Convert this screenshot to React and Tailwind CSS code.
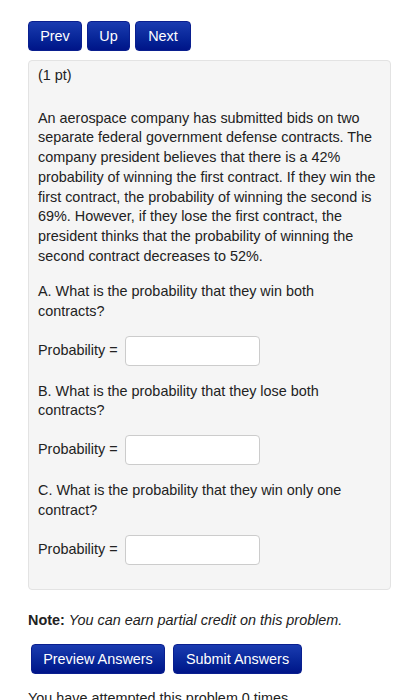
import React from "react";

const btn =
  "h-[30px] rounded-[4px] border border-[#0a1f8f] bg-gradient-to-b from-[#1a3bb0] to-[#001488] text-white text-[14.4px] leading-none";

const AnswerRow = () => (
  <div className="flex items-center gap-[7px] mt-[14px] mb-[16px]">
    <span>Probability =</span>
    <input className="w-[135px] h-[30px] bg-white border border-[#cccccc] rounded-[4px] outline-none" />
  </div>
);

export default function App() {
  return (
    <div
      className="bg-white text-[#222] text-[14.4px] leading-[19.7px] pl-[28px] pr-[29px] pt-[21px]"
      style={{ fontFamily: '"Liberation Sans", Arial, sans-serif' }}
    >
      <div className="flex gap-[5px]">
        <button className={`${btn} w-[54px]`}>Prev</button>
        <button className={`${btn} w-[43px]`}>Up</button>
        <button className={`${btn} w-[56px]`}>Next</button>
      </div>

      <div className="mt-[9px] bg-[#f5f5f5] border border-[#e3e3e3] rounded-[4px] px-[9px] pt-[5px] pb-[8px]">
        <p className="mb-[23px]">(1 pt)</p>
        <p className="mb-[16px]">
          An aerospace company has submitted bids on two separate federal government defense
          contracts. The company president believes that there is a 42% probability of winning the
          first contract. If they win the first contract, the probability of winning the second is
          69%. However, if they lose the first contract, the president thinks that the probability
          of winning the second contract decreases to 52%.
        </p>
        <p>A. What is the probability that they win both contracts?</p>
        <AnswerRow />
        <p>B. What is the probability that they lose both contracts?</p>
        <AnswerRow />
        <p>C. What is the probability that they win only one contract?</p>
        <AnswerRow />
      </div>

      <p className="mt-[21px]">
        <b>Note:</b> <i>You can earn partial credit on this problem.</i>
      </p>

      <div className="flex gap-[8px] mt-[14px] pl-[3px]">
        <button className={`${btn} w-[134px]`}>Preview Answers</button>
        <button className={`${btn} w-[129px]`}>Submit Answers</button>
      </div>

      <p className="mt-[15px]">You have attempted this problem 0 times.</p>
    </div>
  );
}
